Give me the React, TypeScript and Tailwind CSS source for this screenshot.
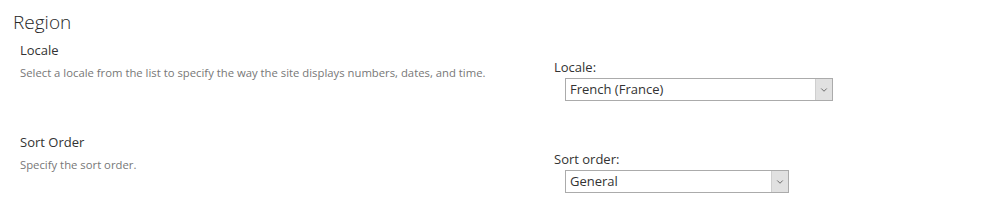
import { ChevronDown } from 'lucide-react';

const font = { fontFamily: '"Open Sans", "Noto Sans", sans-serif' };

type SelectProps = { value: string; width: string };

const FakeSelect = ({ value, width }: SelectProps) => (
  <div className={`flex h-[23px] ${width} border border-[#ababab] bg-white`}>
    <div className="flex-1 pl-[4px] text-[13px] leading-[21px] text-[#333]">{value}</div>
    <div className="flex w-[17px] items-center justify-center border-l border-[#cfcfcf] bg-[#e1e1e1]">
      <ChevronDown className="h-[10px] w-[10px] text-[#555]" strokeWidth={2} />
    </div>
  </div>
);

type SectionProps = {
  title: string;
  description: string;
  label: string;
  value: string;
  selectWidth: string;
};

const Section = ({ title, description, label, value, selectWidth }: SectionProps) => (
  <div className="flex h-[92px]">
    <div className="w-[554px] pl-[20px]">
      <h3 className="text-[13px] leading-[18px] text-[#333]">{title}</h3>
      <p className="mt-[6px] text-[11.3px] leading-[16px] text-[#777]">{description}</p>
    </div>
    <div className="pt-[17px]">
      <label className="block text-[13px] leading-[18px] text-[#333]">{label}</label>
      <div className="mt-[2px] pl-[11px]">
        <FakeSelect value={value} width={selectWidth} />
      </div>
    </div>
  </div>
);

export default function App() {
  return (
    <div className="h-[224px] w-[1004px] bg-white" style={font}>
      <h2 className="pl-[13px] pt-[9px] text-[19px] font-light leading-[26px] text-[#262626]">Region</h2>
      <div className="mt-[6px]">
        <Section
          title="Locale"
          description="Select a locale from the list to specify the way the site displays numbers, dates, and time."
          label="Locale:"
          value="French (France)"
          selectWidth="w-[268px]"
        />
        <Section
          title="Sort Order"
          description="Specify the sort order."
          label="Sort order:"
          value="General"
          selectWidth="w-[224px]"
        />
      </div>
    </div>
  );
}
